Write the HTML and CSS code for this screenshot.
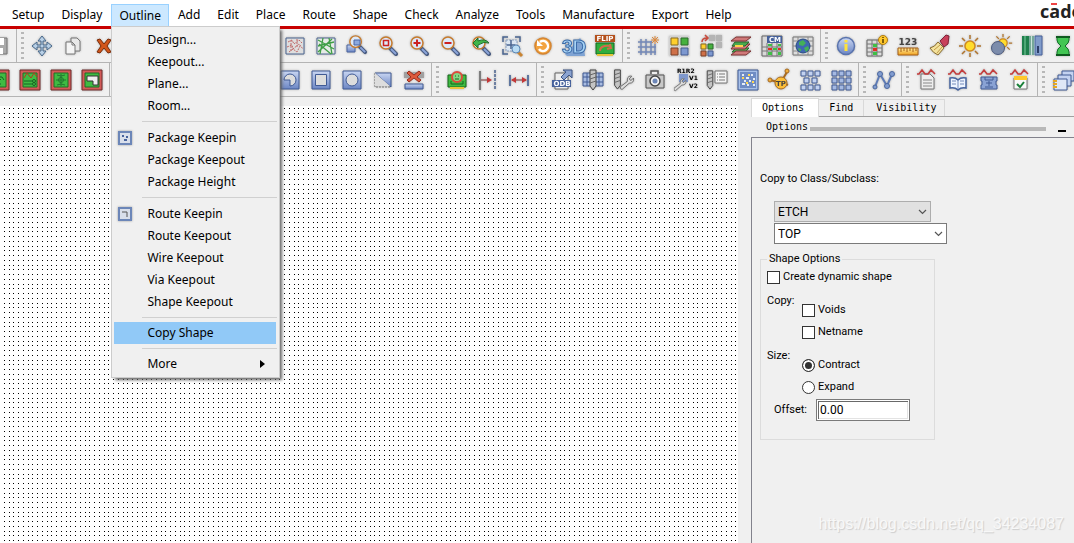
FILE: index.html
```html
<!DOCTYPE html>
<html lang="en">
<head>
    <meta charset="UTF-8">
    <title>PCB Editor</title>
    <link rel="stylesheet" href="styles.css">
</head>
<body>
<svg class="defs" aria-hidden="true">
    <defs>
        <linearGradient id="blue" x1="0" y1="0" x2="0" y2="1"><stop offset="0" stop-color="#c9d6f2"/><stop offset="1" stop-color="#6c86c4"/></linearGradient>
        <linearGradient id="gold" x1="0" y1="0" x2="0" y2="1"><stop offset="0" stop-color="#fff0a0"/><stop offset="1" stop-color="#f0a020"/></linearGradient>
    </defs>
    <!-- file and edit -->
    <symbol id="save" viewBox="0 0 24 24"><path d="M4 4h16v16H4z" fill="#aaa" stroke="#777"/><path d="M7 4h10v7H7zM8 14h8v6H8z" fill="#fff"/></symbol>
    <symbol id="move" viewBox="0 0 24 24"><path d="M12 2l4 5h-3v4h4V8l5 4-5 4v-3h-4v4h3l-4 5-4-5h3v-4H7v3l-5-4 5-4v3h4V7H8z" fill="#b9d0e6" stroke="#48688a"/></symbol>
    <symbol id="copy" viewBox="0 0 24 24"><path d="M10 4h6l3 3v10h-9z" fill="#e8e8e8" stroke="#777"/><path d="M5 8h6l3 3v9H5z" fill="#f4f4f4" stroke="#777"/><path d="M11 8v3h3" fill="none" stroke="#777"/></symbol>
    <symbol id="delete" viewBox="0 0 24 24"><path d="M8 5l4 5 4-5 3 1-4 6 4 6-3 1-4-5-4 5-3-1 4-6-4-6z" fill="#d2571c" stroke="#7c2c08"/></symbol>
    <!-- ratsnest and zoom -->
    <symbol id="rats" viewBox="0 0 24 24"><path d="M3 4h18v16H3z" fill="#dedede" stroke="#4a6490"/><path d="M5 8l4-2 2 4 5-4 3 3M4 13l5-2 1 4 6-5 4 5M6 18l4-3 4 3 3-6M14 5v9M8 6v11" fill="none" stroke="#c06868" stroke-dasharray="2 1"/></symbol>
    <symbol id="rats-on" viewBox="0 0 24 24"><path d="M3 4h18v16H3z" fill="#e6eae6" stroke="#4a6490"/><path d="M4 6l16 9M4 12l16-4M9 4l-3 16M15 4l3 16M4 18l14-13M5 10l12 10" fill="none" stroke="#3f9e45" stroke-width="1.3"/></symbol>
    <symbol id="lens" viewBox="0 0 24 24"><path d="M14 14l6 6" stroke="#475a80" stroke-width="4" stroke-linecap="round"/><path d="M15 15l5 5" stroke="#8ba4d8" stroke-width="2"/><circle cx="10" cy="9" r="6" fill="#dde9f8" stroke="#c77b2d" stroke-width="1.5"/></symbol>
    <symbol id="zoom-area" viewBox="0 0 24 24"><path d="M2 11h8v7H2z" fill="url(#blue)" stroke="#4a64a0"/><use href="#lens" x="1" y="-1" width="23" height="23"/><path d="M9 6h6v5H9z" fill="#8ca9df" stroke="#4864a4"/></symbol>
    <symbol id="zoom-fit" viewBox="0 0 24 24"><use href="#lens"/><path d="M7.500 6.500h5v5h-5z" fill="none" stroke="#c22" stroke-width="1.500"/></symbol>
    <symbol id="zoom-in" viewBox="0 0 24 24"><use href="#lens"/><path d="M6.500 9h7M10 5.500v7" stroke="#c22" stroke-width="2"/></symbol>
    <symbol id="zoom-out" viewBox="0 0 24 24"><use href="#lens"/><path d="M6.500 9h7" stroke="#c22" stroke-width="2"/></symbol>
    <symbol id="zoom-prev" viewBox="0 0 24 24"><use href="#lens"/><path d="M4 9l5-5v3q7-3 11 2-5-2-11 2v3z" fill="#41b54a" stroke="#216f2a"/></symbol>
    <symbol id="zoom-center" viewBox="0 0 24 24"><path d="M3 8V3h5M15 3h5v5M3 15v5h5" fill="none" stroke="#4a6490" stroke-width="1.500"/><path d="M6 6h11v11H6z" fill="#dbe6f2" stroke="#8aa0c0" stroke-dasharray="2 1"/><path d="M11 6v9M6.500 11h9" stroke="#4a6490" stroke-width="1.500"/><path d="M18 18l4 4" stroke="#c98432" stroke-width="3"/><circle cx="16" cy="15" r="4" fill="#b9dcf4" stroke="#5c86b4"/></symbol>
    <symbol id="redraw" viewBox="0 0 24 24"><circle cx="12" cy="12" r="8" fill="#f3a440" stroke="#d78630" stroke-width="1.500"/><path d="M9 8a5 5 0 1 1-1 7" fill="none" stroke="#fff" stroke-width="2.500"/><path d="M6 6v6h6z" fill="#fff"/></symbol>
    <symbol id="three-d" viewBox="0 0 24 24"><path d="M3 20l2 2h18l-2-14-3-4z" fill="#7fa3d3"/></symbol>
    <symbol id="flip" viewBox="0 0 24 24"><path d="M2 1h20v7H2z" fill="#b4501c"/><path d="M3 9h18v11H3z" fill="#2fae3c" stroke="#176a22"/><path d="M7 17q0-6 10-5M17 10l1 4-4 1" fill="none" stroke="#d06a4a" stroke-width="2"/><path d="M4 20h16v2H4z" fill="#e8c53c"/></symbol>
    <!-- display -->
    <symbol id="grid" viewBox="0 0 24 24"><path d="M5 5v16M10 5v16M15 7v14M2 8h14M2 13h18M2 18h18M19 10v11" fill="none" stroke="#7489b8" stroke-width="1.500"/><path d="M19 2v8M15 6h8M16 3l6 6M22 3l-6 6" stroke="#e08a3c"/></symbol>
    <symbol id="tiles" viewBox="0 0 24 24"><path d="M2 2h20v20H2z" fill="#d2d2d2"/><path d="M4 4h7v7H4z" fill="#ffcf2c" stroke="#866a22"/><path d="M14 4h7v7h-7z" fill="#46b13e" stroke="#2a6a2a"/><path d="M4 14h7v7H4z" fill="#cf7048" stroke="#7a4128"/><path d="M14 14h7v7h-7z" fill="#7d98cf" stroke="#445a90"/></symbol>
    <symbol id="tiles-move" viewBox="0 0 24 24"><path d="M11 1h6v6h-6zM18 1h6v6h-6zM18 8h6v6h-6z" fill="#b4b4b4"/><path d="M3 10h5v5H3z" fill="#ffcf2c" stroke="#866a22"/><path d="M10 10h5v5h-5z" fill="#46b13e" stroke="#2a6a2a"/><path d="M3 17h5v5H3z" fill="#cf7048" stroke="#7a4128"/><path d="M10 17h5v5h-5z" fill="#7d98cf" stroke="#445a90"/><path d="M4 8q0-4 5-4M7 1l3 3-3 3" fill="none" stroke="#c84a3c" stroke-width="1.500"/></symbol>
    <symbol id="layers" viewBox="0 0 24 24"><path d="M7 14h13l-4 4H3z" fill="#4aa94e" stroke="#296a2d"/><path d="M7 17h15l-5 4H2z" fill="#cf7878" stroke="#7c3434"/><path d="M6 10h15l-5 5H2z" fill="#cf7878" stroke="#7c3434"/><path d="M6 8h14l-4 4H3z" fill="#4aa94e" stroke="#296a2d"/><path d="M6 12h8" stroke="#ffd34a" stroke-width="2"/><path d="M7 3h15l-5 4H2z" fill="#cf7878" stroke="#7c3434"/></symbol>
    <symbol id="cm" viewBox="0 0 24 24"><path d="M2 2h20v20H2z" fill="#d8d8d8" stroke="#666"/><path d="M7 2h15v7H7z" fill="#46619b"/><path d="M2 13h20M2 17h20M7 9v13M12 9v13M17 9v13" stroke="#777"/><path d="M8 10h4v2H8zM8 18h4v3H8zM13 14h4v2h-4zM18 18h3v3h-3zM18 10h3v2h-3z" fill="#3fbf46"/><path d="M8 14h4v2H8zM18 14h3v2h-3z" fill="#e02f26"/></symbol>
    <symbol id="globe" viewBox="0 0 24 24"><path d="M2 3h20v18H2z" fill="#ddd" stroke="#777"/><path d="M2 7h20M2 12h20M2 17h20M7 3v18M17 3v18" stroke="#888"/><circle cx="12" cy="12" r="7" fill="#3f68b0" stroke="#284a80"/><path d="M8 8l4-2 3 3-3 3-4-1zM13 14l4-2 1 3-3 3zM7 14l3 1v2H8z" fill="#44b058"/></symbol>
    <symbol id="info" viewBox="0 0 24 24"><circle cx="12" cy="12" r="8.500" fill="url(#blue)" stroke="#5a74ae" stroke-width="1.500"/><path d="M12 10v7M12 6v2.500" stroke="#ffe23c" stroke-width="3"/></symbol>
    <symbol id="sheet-info" viewBox="0 0 24 24"><path d="M2 6h15v16H2z" fill="#ddd" stroke="#666"/><path d="M2 10h15M2 14h15M2 18h15M7 6v16M12 6v16" stroke="#777"/><path d="M8 10h4v3H8zM8 18h4v3H8z" fill="#3fbf46"/><path d="M8 14h4v3H8z" fill="#e02f26"/><circle cx="18" cy="6" r="4.500" fill="#ffc92e" stroke="#b07c14"/><path d="M18 3v1M18 5v4" stroke="#553c00" stroke-width="1.500"/></symbol>
    <symbol id="measure" viewBox="0 0 24 24"><path d="M2 14h20v7H2z" fill="url(#gold)" stroke="#a65e16"/><path d="M5 14v4M8 14v3M11 14v4M14 14v3M17 14v4M20 14v3" stroke="#a65e16"/></symbol>
    <symbol id="brush" viewBox="0 0 24 24"><path d="M13 7l6-6 3 1-1 8-4 3z" fill="#c8405a" stroke="#7f2338"/><path d="M11 8l6 6-6 7q-5-2-8-7 5-1 8-6z" fill="#f4e29c" stroke="#8a6d30"/><path d="M7 16l6-5M10 19l5-6" stroke="#c09a48"/></symbol>
    <symbol id="sun" viewBox="0 0 24 24"><path d="M12 1v4M12 19v4M1 12h4M19 12h4M4 4l3 3M17 17l3 3M20 4l-3 3M4 20l3-3" stroke="#b0742e" stroke-width="1.500"/><circle cx="12" cy="12" r="5" fill="#ffdc2c" stroke="#d08a20" stroke-width="1.500"/></symbol>
    <symbol id="shadow" viewBox="0 0 24 24"><use href="#sun" x="4" y="-1" width="20" height="20"/><circle cx="9" cy="14" r="6.500" fill="#7c8cab" stroke="#4c5c80"/></symbol>
    <symbol id="books" viewBox="0 0 24 24"><path d="M2 2h7v19H2z" fill="#1f7f4c"/><path d="M5 2v19" stroke="#7ed0a0"/><path d="M9 2h6v19H9z" fill="#c9e6da"/><path d="M10 2v19M13 2v19" stroke="#246a58"/><path d="M15 2h7v19h-7z" fill="#819cca" stroke="#46619b"/><path d="M17 12h2v7h-2z" fill="#2d3f6a"/></symbol>
    <symbol id="timer" viewBox="0 0 24 24"><path d="M6 3h12v3q0 3-4 6 4 3 4 6v3H6v-3q0-3 4-6-4-3-4-6z" fill="#42c653" stroke="#14732a"/><path d="M5 3h14M5 21h14" stroke="#0f5a1f" stroke-width="2"/></symbol>
    <!-- placement boards -->
    <symbol id="board" viewBox="0 0 24 24"><path d="M2 2h20v20H2z" fill="#d25a58" stroke="#6e2a2a"/><path d="M5 5h14v14H5z" fill="#3fbb42" stroke="#216f26"/></symbol>
    <symbol id="board-net" viewBox="0 0 24 24"><use href="#board"/><path d="M6 9h9l2 3M6 13h6l2-2M6 16h8" fill="none" stroke="#176124"/></symbol>
    <symbol id="board-wave" viewBox="0 0 24 24"><use href="#board"/><path d="M6 10l3-5 4 5 3-5 3 4" fill="none" stroke="#b03c20"/><path d="M6 13h8M6 16h8" stroke="#176124"/><circle cx="16" cy="13" r="1.500" fill="none" stroke="#176124"/><circle cx="16" cy="16" r="1.500" fill="none" stroke="#176124"/></symbol>
    <symbol id="board-cross" viewBox="0 0 24 24"><use href="#board"/><path d="M12 6v12M7 12h10M8 7q4 2 8 0M8 17q4-2 8 0" fill="none" stroke="#23762f"/><circle cx="12" cy="12" r="2.500" fill="none" stroke="#23762f"/></symbol>
    <symbol id="board-shape" viewBox="0 0 24 24"><use href="#board"/><path d="M7 8h11v9h-5v-4H7z" fill="#eee" stroke="#333"/></symbol>
    <!-- shapes -->
    <symbol id="tile" viewBox="0 0 24 24"><path d="M3 3h18v18H3z" fill="url(#blue)" stroke="#405a94"/></symbol>
    <symbol id="shape-arc" viewBox="0 0 24 24"><use href="#tile"/><path d="M6 12a6 6 0 1 1 6 6v-6z" fill="#ddd" stroke="#405a94"/></symbol>
    <symbol id="shape-rect" viewBox="0 0 24 24"><use href="#tile"/><path d="M6.500 6.500h11v11h-11z" fill="#ddd" stroke="#405a94"/></symbol>
    <symbol id="shape-circle" viewBox="0 0 24 24"><use href="#tile"/><circle cx="12" cy="12" r="6" fill="#ddd" stroke="#405a94"/></symbol>
    <symbol id="shape-cut" viewBox="0 0 24 24"><path d="M4 5h16v14z" fill="url(#blue)" stroke="#405a94"/><path d="M4 5v14h16" fill="none" stroke="#777" stroke-dasharray="2 1"/><path d="M4 5v13h15z" fill="#ddd"/></symbol>
    <symbol id="shape-del" viewBox="0 0 24 24"><path d="M2 4h20v6H2z" fill="#a0a0a0"/><path d="M3 16h18v5H3z" fill="url(#blue)" stroke="#405a94"/><path d="M7 3l5 4 5-4 2 2-4 4 4 3-2 2-5-4-5 4-2-2 4-3-4-4z" fill="#dc5a3c" stroke="#9c2c1c"/></symbol>
    <symbol id="board-find" viewBox="0 0 24 24"><path d="M3 7h18v12H3z" fill="#3fbb42" stroke="#16661d"/><path d="M5 19h14v2H5z" fill="#e8c53c"/><path d="M6 13v3h12v-3" fill="none" stroke="#16661d"/><circle cx="12" cy="9" r="5" fill="#84d884" stroke="#dc4a3a" stroke-width="2"/><path d="M10 8h1M13 8h1M10 11h4" stroke="#16661d"/></symbol>
    <symbol id="space-one" viewBox="0 0 24 24"><path d="M4 3v19" stroke="#7d7d7d" stroke-width="2"/><path d="M19 2v20" stroke="#4c6490" stroke-width="1.500" stroke-dasharray="3 1"/><path d="M5 12h8" stroke="#7f3030"/><path d="M11 9l5 3-5 3z" fill="#c43838"/></symbol>
    <symbol id="space-two" viewBox="0 0 24 24"><path d="M3 7v11M21 7v11" stroke="#5d759f" stroke-width="2"/><path d="M5 12h14" stroke="#7f3030"/><path d="M9 9l-5 3 5 3zM15 9l5 3-5 3z" fill="#c43838"/></symbol>
    <!-- manufacture -->
    <symbol id="odb" viewBox="0 0 24 24"><path d="M5 5h13v16H5z" fill="#eee" stroke="#666"/><path d="M2 12h19v7H2z" fill="#46619b"/><path d="M11 9l5-5-3-2h9v8l-3-3-5 5z" fill="#8ba3d0" stroke="#3c5484"/></symbol>
    <symbol id="drill-table" viewBox="0 0 24 24"><path d="M2 5h20v13H2z" fill="#a9bce0" stroke="#405a94"/><path d="M2 9h20M2 14h20M6 5v13M18 5v13" stroke="#405a94"/><use href="#drill"/></symbol>
    <symbol id="drill" viewBox="0 0 24 24"><path d="M9 2h6v16l-3 4-3-4z" fill="#c4c4c4" stroke="#444"/><path d="M9 7l6-2M9 11l6-2M9 15l6-2" stroke="#666"/></symbol>
    <symbol id="wrench" viewBox="0 0 24 24"><path d="M20 8l-3 3-2-2 3-3q-4-1-5 3v3l-8 6q-1 3 2 3l8-7q6 0 5-6z" fill="#ddd" stroke="#666"/></symbol>
    <symbol id="drill-set" viewBox="0 0 24 24"><use href="#drill" x="-6" y="0" width="23" height="23"/><use href="#wrench" x="4" y="3" width="21" height="21"/></symbol>
    <symbol id="camera" viewBox="0 0 24 24"><path d="M8 6V3h7v3" fill="#eee" stroke="#555" stroke-width="1.500"/><path d="M3 7h18v13H3z" fill="#c8c8c8" stroke="#555"/><circle cx="12" cy="13" r="5" fill="#f4f4f4" stroke="#444" stroke-width="1.500"/><circle cx="12" cy="13" r="2.500" fill="#6d87b8"/></symbol>
    <symbol id="refdes" viewBox="0 0 24 24"><path d="M5 6h9v8H5z" fill="#7f98cc"/><use href="#wrench" x="-4" y="6" width="19" height="19"/></symbol>
    <symbol id="drill-legend" viewBox="0 0 24 24"><path d="M10 3h12v12H10z" fill="#f4f4f4" stroke="#777"/><path d="M12 6h1M14 6h6M12 9h1M14 9h6M12 12h1M14 12h6" stroke="#777"/><use href="#drill" x="-6" y="1" width="22" height="22"/></symbol>
    <symbol id="thieving" viewBox="0 0 24 24"><path d="M2 2h20v20H2z" fill="#a8c0e8" stroke="#3d5894"/><path d="M4 4h16v16H4z" fill="#6f8cc4"/><path d="M6 7h2M15 7h2M10 10h3M8 13h2M13 13h2M6 16h3M11 17h2M17 11h2M17 17h2" stroke="#e4ecf8" stroke-width="2"/><path d="M12 7h2M6 10h2M16 14h2M10 15h2" stroke="#ffd850" stroke-width="2"/></symbol>
    <symbol id="testpoint" viewBox="0 0 24 24"><path d="M3 12l8 2M14 14l6-10M16 15l5 2" stroke="#a86a20" stroke-width="2"/><circle cx="3" cy="12" r="2" fill="#f0ae3c" stroke="#a86a20"/><circle cx="20" cy="3" r="2" fill="#f0ae3c" stroke="#a86a20"/><circle cx="14" cy="15" r="6" fill="#fdbf38" stroke="#a86a20"/></symbol>
    <symbol id="vias" viewBox="0 0 24 24"><path d="M3 3h5v5H3zM10 3h5v5h-5zM17 3h5v5h-5zM6 10h5v5H6zM14 10h5v5h-5zM3 17h5v5H3zM10 17h5v5h-5zM17 17h5v5h-5z" fill="#c3d2f0" stroke="#405a94"/></symbol>
    <symbol id="array" viewBox="0 0 24 24"><path d="M3 3h5v5H3zM10 3h5v5h-5zM17 3h5v5h-5zM3 10h5v5H3zM10 10h5v5h-5zM17 10h5v5h-5zM3 17h5v5H3zM10 17h5v5h-5zM17 17h5v5h-5z" fill="#a5b9e2" stroke="#405a94"/></symbol>
    <symbol id="nodes" viewBox="0 0 24 24"><path d="M3 19l5-13 7 12 5-12" fill="none" stroke="#5e7bb6" stroke-width="2"/><g fill="#819cd0" stroke="#4c689f"><circle cx="3" cy="19" r="2"/><circle cx="8" cy="6" r="2.500"/><circle cx="15" cy="18" r="2.500"/><circle cx="20" cy="6" r="2.500"/></g></symbol>
    <!-- signal reports -->
    <symbol id="wave" viewBox="0 0 24 24"><path d="M2 6h2l3-4 3 4h3l3-4 4 4" fill="none" stroke="#c43c3c" stroke-width="1.500"/></symbol>
    <symbol id="wave-report" viewBox="0 0 24 24"><path d="M6 6h9l4 4v11H6z" fill="#eee" stroke="#777"/><path d="M8 12h9M8 15h9M8 18h9" stroke="#888"/><use href="#wave"/></symbol>
    <symbol id="wave-book" viewBox="0 0 24 24"><path d="M4 10q5-1 8 2 3-3 8-2v10q-5-1-8 2-3-3-8-2z" fill="#eef4ff" stroke="#4664a0" stroke-width="1.500"/><path d="M12 12v9M6 13h4M6 16h4M14 13h4M14 16h4" stroke="#7289b8"/><use href="#wave"/></symbol>
    <symbol id="wave-chip" viewBox="0 0 24 24"><path d="M4 9h16v4h-1v4h1v4H4v-4h1v-4H4z" fill="#89a2d4" stroke="#405a94"/><path d="M8 9v3h8V9M12 13v5M9 15h6M8 19h8" fill="none" stroke="#405a94"/><use href="#wave"/></symbol>
    <symbol id="wave-check" viewBox="0 0 24 24"><path d="M6 10h13v11H6z" fill="#f8f8f8" stroke="#777"/><path d="M6 8h13v4H6z" fill="#ffc82c"/><path d="M9 16l3 3 4-5" fill="none" stroke="#188038" stroke-width="2"/><use href="#wave"/></symbol>
    <symbol id="stack" viewBox="0 0 24 24"><path d="M11 3h12v10H11z" fill="#c3d2f0" stroke="#405a94"/><path d="M7 7h13v11H7z" fill="#c3d2f0" stroke="#405a94"/><path d="M3 11h13v11H3z" fill="#dfe7f6" stroke="#405a94"/><path d="M2 13h4M2 16h4M2 19h4" stroke="#e6a822" stroke-width="2"/></symbol>
    <!-- menu marks -->
    <symbol id="pkg" viewBox="0 0 14 14"><path d="M1 1h12v12H1z" fill="#d9dfeb" stroke="#6c86b8" stroke-width="2"/><path d="M4 4h2v2H4zM8 5h2v2H8zM6 8h3v2H6z" fill="#47629c"/></symbol>
    <symbol id="rte" viewBox="0 0 14 14"><path d="M1 1h12v12H1z" fill="#d9dfeb" stroke="#6c86b8" stroke-width="2"/><path d="M4 5h5v5" fill="none" stroke="#555"/></symbol>
    <symbol id="chevron" viewBox="0 0 9 6"><path d="M1 1l3.500 3.500L8 1" fill="none" stroke="#555" stroke-width="1.200"/></symbol>
</svg>

<header class="menubar">
    <nav>
        <button>Setup</button>
        <button>Display</button>
        <div class="menu-holder">
            <button class="open">Outline</button>
            <div class="menu">
                <button>Design...</button>
                <button>Keepout...</button>
                <button>Plane...</button>
                <button>Room...</button>
                <hr>
                <button class="marked"><svg><use href="#pkg"/></svg>Package Keepin</button>
                <button>Package Keepout</button>
                <button>Package Height</button>
                <hr>
                <button class="marked"><svg><use href="#rte"/></svg>Route Keepin</button>
                <button>Route Keepout</button>
                <button>Wire Keepout</button>
                <button>Via Keepout</button>
                <button>Shape Keepout</button>
                <hr>
                <button class="active">Copy Shape</button>
                <hr>
                <button class="more">More</button>
            </div>
        </div>
        <button>Add</button>
        <button>Edit</button>
        <button>Place</button>
        <button>Route</button>
        <button>Shape</button>
        <button>Check</button>
        <button>Analyze</button>
        <button>Tools</button>
        <button>Manufacture</button>
        <button>Export</button>
        <button>Help</button>
    </nav>
    <div class="logo">c<span>a</span>de</div>
</header>

<div class="toolbar">
    <div class="group">
        <button title="Save"><svg><use href="#save"/></svg></button>
    </div>
    <div class="group">
        <button title="Move"><svg><use href="#move"/></svg></button>
        <button title="Copy"><svg><use href="#copy"/></svg></button>
        <button title="Delete"><svg><use href="#delete"/></svg></button>
    </div>
    <div class="group">
        <button title="Undo"><svg><use href="#zoom-prev"/></svg></button>
        <button title="Redo"><svg><use href="#redraw"/></svg></button>
    </div>
    <div class="group">
        <button title="Fix"><svg><use href="#tile"/></svg></button>
        <button title="Unfix"><svg><use href="#tile"/></svg></button>
    </div>
    <div class="group">
        <button title="Unrats all"><svg><use href="#rats"/></svg></button>
        <button title="Rats all"><svg><use href="#rats-on"/></svg></button>
        <button title="Zoom points"><svg><use href="#zoom-area"/></svg></button>
        <button title="Zoom fit"><svg><use href="#zoom-fit"/></svg></button>
        <button title="Zoom in"><svg><use href="#zoom-in"/></svg></button>
        <button title="Zoom out"><svg><use href="#zoom-out"/></svg></button>
        <button title="Zoom previous"><svg><use href="#zoom-prev"/></svg></button>
        <button title="Zoom selection"><svg><use href="#zoom-center"/></svg></button>
        <button title="Redraw"><svg><use href="#redraw"/></svg></button>
        <button title="3D view"><svg><use href="#three-d"/><text x="0" y="19" class="glyph-3d">3D</text></svg></button>
        <button title="Flip design"><svg><use href="#flip"/><text x="12" y="7" class="glyph-flip">FLIP</text></svg></button>
    </div>
    <div class="group">
        <button title="Grid toggle"><svg><use href="#grid"/></svg></button>
        <button title="Color"><svg><use href="#tiles"/></svg></button>
        <button title="Color visibility"><svg><use href="#tiles-move"/></svg></button>
        <button title="Cross section"><svg><use href="#layers"/></svg></button>
        <button title="Constraint manager"><svg><use href="#cm"/><text x="15" y="8" class="glyph-cm">CM</text></svg></button>
        <button title="Worldview"><svg><use href="#globe"/></svg></button>
    </div>
    <div class="group">
        <button title="Show element"><svg><use href="#info"/></svg></button>
        <button title="Show constraint"><svg><use href="#sheet-info"/></svg></button>
        <button title="Measure"><svg><use href="#measure"/><text x="12" y="11" class="glyph-num">123</text></svg></button>
        <button title="Highlight"><svg><use href="#brush"/></svg></button>
        <button title="Shadow off"><svg><use href="#sun"/></svg></button>
        <button title="Shadow on"><svg><use href="#shadow"/></svg></button>
        <button title="Reports"><svg><use href="#books"/></svg></button>
        <button title="Waive"><svg><use href="#timer"/></svg></button>
    </div>
</div>

<div class="toolbar">
    <div class="group">
        <button title="General edit"><svg><use href="#board-net"/></svg></button>
        <button title="Signal edit"><svg><use href="#board-wave"/></svg></button>
        <button title="Placement edit"><svg><use href="#board-cross"/></svg></button>
        <button title="Shape edit"><svg><use href="#board-shape"/></svg></button>
    </div>
    <div class="group">
        <button title="Line"><svg><use href="#tile"/></svg></button>
        <button title="Rectangle"><svg><use href="#tile"/></svg></button>
        <button title="Text"><svg><use href="#tile"/></svg></button>
        <button title="Edit text"><svg><use href="#tile"/></svg></button>
        <button title="Polygon"><svg><use href="#tile"/></svg></button>
        <button title="Shape select"><svg><use href="#shape-arc"/></svg></button>
        <button title="Void rectangle"><svg><use href="#shape-rect"/></svg></button>
        <button title="Void circle"><svg><use href="#shape-circle"/></svg></button>
        <button title="Edit boundary"><svg><use href="#shape-cut"/></svg></button>
        <button title="Delete islands"><svg><use href="#shape-del"/></svg></button>
    </div>
    <div class="group">
        <button title="Place manually"><svg><use href="#board-find"/></svg></button>
        <button title="Slide spacing"><svg><use href="#space-one"/></svg></button>
        <button title="Dimension"><svg><use href="#space-two"/></svg></button>
    </div>
    <div class="group">
        <button title="ODB export"><svg><use href="#odb"/><text x="12" y="18" class="glyph-odb">ODB</text></svg></button>
        <button title="Drill table"><svg><use href="#drill-table"/></svg></button>
        <button title="Drill customization"><svg><use href="#drill-set"/></svg></button>
        <button title="Artwork"><svg><use href="#camera"/></svg></button>
        <button title="Auto rename"><svg><use href="#refdes"/><text x="3" y="5" class="glyph-ref">R1R2</text><text x="15" y="12" class="glyph-ref">V1</text><text x="15" y="20" class="glyph-ref">V2</text></svg></button>
        <button title="Drill legend"><svg><use href="#drill-legend"/></svg></button>
        <button title="Thieving"><svg><use href="#thieving"/></svg></button>
        <button title="Testprep"><svg><use href="#testpoint"/><text x="14" y="18" class="glyph-tp">TP</text></svg></button>
        <button title="Via array"><svg><use href="#vias"/></svg></button>
        <button title="Full array"><svg><use href="#array"/></svg></button>
    </div>
    <div class="group">
        <button title="Topology"><svg><use href="#nodes"/></svg></button>
    </div>
    <div class="group">
        <button title="Signal report"><svg><use href="#wave-report"/></svg></button>
        <button title="Signal library"><svg><use href="#wave-book"/></svg></button>
        <button title="Signal model"><svg><use href="#wave-chip"/></svg></button>
        <button title="Signal audit"><svg><use href="#wave-check"/></svg></button>
    </div>
    <div class="group">
        <button title="Windows"><svg><use href="#stack"/></svg></button>
    </div>
</div>

<main>
    <div class="canvas"></div>
    <aside>
        <div class="tabs">
            <button class="current">Options</button>
            <button>Find</button>
            <button>Visibility</button>
        </div>
        <div class="titlebar">
            <span>Options</span>
            <i class="bar"></i>
            <button title="Minimize"></button>
        </div>
        <form class="options">
            <label for="class">Copy to Class/Subclass:</label>
            <div class="selects">
                <div class="select gray">
                    <select id="class"><option>ETCH</option></select>
                    <svg><use href="#chevron"/></svg>
                </div>
                <div class="select">
                    <select aria-label="Subclass"><option>TOP</option></select>
                    <svg><use href="#chevron"/></svg>
                </div>
            </div>
            <fieldset>
                <legend>Shape Options</legend>
                <label class="check"><input type="checkbox">Create dynamic shape</label>
                <div class="row">
                    <span>Copy:</span>
                    <div>
                        <label><input type="checkbox">Voids</label>
                        <label><input type="checkbox">Netname</label>
                    </div>
                </div>
                <div class="row">
                    <span>Size:</span>
                    <div>
                        <label><input type="radio" name="size" checked>Contract</label>
                        <label><input type="radio" name="size">Expand</label>
                    </div>
                </div>
                <div class="offset">
                    <label for="offset">Offset:</label>
                    <input type="text" id="offset" value="0.00">
                </div>
            </fieldset>
        </form>
        <p class="watermark">https://blog.csdn.net/qq_34234087</p>
    </aside>
</main>
</body>
</html>
```
FILE: styles.css
```css
* {
    box-sizing: border-box;
}
body {
    margin: 0;
    height: 100vh;
    display: flex;
    flex-direction: column;
    overflow: hidden;
    background: #f0f0f0;
    color: #000;
    font-family: Roboto, "Liberation Sans", sans-serif;
    font-size: 11px;
    line-height: 16px;
}
button {
    padding: 0;
    border: 0;
    background: none;
    color: inherit;
    font: inherit;
}
.defs {
    position: absolute;
    width: 0;
    height: 0;
}

/* menu bar */
.menubar {
    display: flex;
    height: 29px;
    justify-content: space-between;
    background: #fff;
    border-bottom: 3px solid #c80000;
    font: 12px/20px "Noto Sans", sans-serif;
}
.menubar nav {
    display: flex;
    gap: 1px;
    padding: 4px 0 0 4px;
}
nav > button, .menu-holder > button {
    height: 22px;
    padding: 0 8px;
}
.menu-holder {
    position: relative;
}
.menu-holder > .open {
    padding: 0 7px;
    border: 1px solid #99d1ff;
    border-bottom: 0;
    background: #cce8ff;
}
.menu {
    position: absolute;
    z-index: 2;
    top: 22px;
    left: 0;
    width: 169px;
    padding: 2px;
    border: 1px solid #ccc;
    background: #f0f0f0;
    box-shadow: 3px 3px 3px -1px #666;
}
.menu button {
    display: block;
    width: 162px;
    height: 22px;
    padding-left: 33px;
    text-align: left;
}
.menu .marked {
    display: flex;
    height: 23px;
    padding-left: 4px;
    align-items: center;
    gap: 15px;
}
.marked svg {
    width: 14px;
    height: 14px;
    filter: drop-shadow(0 0 1px #999);
}
.menu .active {
    background: #91c9f7;
}
.menu .more {
    display: flex;
    align-items: center;
    justify-content: space-between;
    padding-right: 11px;
}
.more::after {
    content: "";
    border: 4px solid transparent;
    border-left: 5px solid #000;
    border-right: 0;
}
.menu hr {
    height: 1px;
    margin: 4px 0 4px 28px;
    border: 0;
    background: #d0d0d0;
}
.logo {
    width: 34px;
    overflow: hidden;
    color: #222;
    font: bold 18px/22px "Open Sans", sans-serif;
}
.logo span {
    position: relative;
}
.logo span::before {
    content: "";
    position: absolute;
    top: 4px;
    left: 2px;
    width: 6px;
    height: 2px;
    background: #e44;
}

/* toolbars */
.toolbar {
    display: flex;
    height: 34px;
    overflow: hidden;
    border-bottom: 1px solid #b4b4b4;
    background: #f0f0f0;
}
.group {
    display: flex;
    flex: none;
    align-items: center;
    padding-right: 2px;
    border-left: 1px solid #b4b4b4;
}
.group:first-child {
    margin-left: -27px;
}
.group::before {
    content: "";
    width: 3px;
    height: 27px;
    margin: 0 2px 0 4px;
    background: repeating-linear-gradient(#b8b8b8 0 2px, transparent 2px 5px);
}
.group button {
    display: grid;
    width: 31px;
    height: 32px;
    place-items: center;
}
.group svg {
    width: 24px;
    height: 24px;
    overflow: visible;
    filter: drop-shadow(0 0 1px #aaa);
}
.glyph-3d {
    fill: #a8d4f6;
    stroke: #3c6ba8;
    font: bold 19px "Liberation Sans", sans-serif;
}
.glyph-flip, .glyph-cm, .glyph-odb {
    fill: #fff;
    font: bold 7px "DejaVu Sans", sans-serif;
    text-anchor: middle;
}
.glyph-num, .glyph-tp {
    fill: #444;
    font: bold 9px "DejaVu Sans", sans-serif;
    text-anchor: middle;
}
.glyph-tp {
    font-size: 7px;
}
.glyph-ref {
    fill: #000;
    font: bold 6px "DejaVu Sans", sans-serif;
}

/* design canvas */
main {
    display: flex;
    flex: 1;
}
.canvas {
    flex: 1;
    margin-top: 9px;
    background:
        linear-gradient(90deg, #fff 4px, transparent 4px 5px, #fff 5px 9px, transparent 9px 10px, #fff 10px 13px, transparent 13px 14px, #fff 14px 18px, transparent 18px) 0 0 / 19px 19px,
        linear-gradient(#fff 2px, transparent 2px 3px, #fff 3px 7px, transparent 7px 8px, #fff 8px 11px, transparent 11px 12px, #fff 12px 16px, transparent 16px 17px, #fff 17px) 0 0 / 19px 19px,
        #000;
}

/* side panel */
aside {
    position: relative;
    display: flex;
    flex-direction: column;
    width: 336px;
    padding: 1px 0 0 13px;
}
.tabs {
    display: flex;
    height: 19px;
    align-items: flex-end;
    border-bottom: 1px solid #a0a0a0;
}
.tabs, .titlebar {
    font: 10px/16px "DejaVu Sans Mono", monospace;
}
.tabs button {
    height: 17px;
    padding: 0 10px;
    border: 1px solid #d9d9d9;
    border-width: 1px 1px 0 0;
}
.tabs button:last-child {
    padding: 0 8px 0 12px;
}
.tabs .current {
    align-self: flex-start;
    height: 19px;
    padding: 0 14px 0 10px;
    border-left-width: 1px;
    background: #fff;
}
.titlebar {
    display: flex;
    height: 20px;
    align-items: center;
    padding: 0 8px 0 15px;
    gap: 2px;
}
.bar {
    flex: 1;
    height: 4px;
    margin-top: 4px;
    background: #b8b8b8;
}
.titlebar button {
    width: 8px;
    height: 2px;
    margin: 8px 0 0 10px;
    background: #000;
}
.options {
    flex: 1;
    padding: 33px 0 0 8px;
    border: solid #82828c;
    border-width: 1px 0 0 1px;
}
.selects {
    display: grid;
    justify-items: start;
    gap: 1px;
    margin: 14px 0 7px 14px;
}
.select {
    display: grid;
    width: 173px;
    align-items: center;
}
.select.gray {
    width: 157px;
}
.select > * {
    grid-area: 1 / 1;
}
select {
    height: 21px;
    padding: 0 3px;
    appearance: none;
    border: 1px solid #7a7a7a;
    border-radius: 0;
    background: #fff;
    color: #000;
    font: inherit;
}
.gray select {
    border-color: #adadad;
    background: #e1e1e1;
}
.select svg {
    width: 9px;
    height: 6px;
    margin-right: 4px;
    justify-self: end;
    pointer-events: none;
}
select, .offset input {
    font-size: 12px;
}
fieldset {
    width: 175px;
    margin: 0;
    padding: 2px 6px 18px;
    border: 1px solid #dcdcdc;
}
legend {
    padding: 0 2px;
}
fieldset label {
    display: flex;
    align-items: center;
    gap: 3px;
}
.row {
    display: grid;
    grid-template-columns: 35px 1fr;
    margin-top: 5px;
}
.check + .row {
    margin-top: 8px;
}
.row div {
    padding-top: 6px;
}
.row label {
    height: 22px;
}
input[type=checkbox], input[type=radio] {
    width: 13px;
    height: 13px;
    margin: 0;
    appearance: none;
    border: 1px solid #333;
    background: #fff;
}
input[type=radio] {
    border-radius: 50%;
}
input[type=radio]:checked {
    background: #333;
    box-shadow: inset 0 0 0 2px #fff;
}
.offset {
    display: flex;
    justify-content: space-between;
    margin-top: 1px;
    padding: 0 18px 0 7px;
}
.offset input {
    width: 94px;
    height: 22px;
    padding: 0 3px;
    border: 1px solid #7a7a7a;
    border-radius: 0;
    background: #fff;
    box-shadow: inset 0 0 0 1px #fff, inset 2px 2px #696969, inset -2px -2px #e3e3e3;
    font-family: inherit;
}
.watermark {
    position: absolute;
    right: 10px;
    bottom: 9px;
    margin: 0;
    color: #f8f8f8;
    font: 16px/20px "Liberation Sans", sans-serif;
    text-shadow: 1px 1px 1px #ccc;
}
```
